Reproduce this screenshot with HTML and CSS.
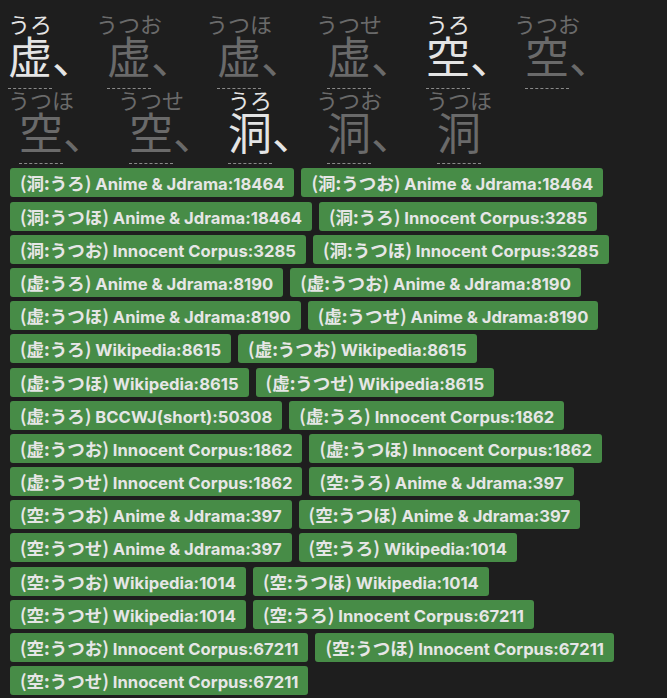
FILE: index.html
```html
<!DOCTYPE html>
<html lang="ja">
<head>
<meta charset="utf-8">
<link rel="stylesheet" href="styles.css">
</head>
<body>
<div class="readings">
  <span class="word on"><span class="stack"><span class="rt">うろ</span><span class="rb">虚</span></span><span class="sep">、</span></span>
  <span class="word long"><span class="stack"><span class="rt">うつお</span><span class="rb">虚</span></span><span class="sep">、</span></span>
  <span class="word long"><span class="stack"><span class="rt">うつほ</span><span class="rb">虚</span></span><span class="sep">、</span></span>
  <span class="word long"><span class="stack"><span class="rt">うつせ</span><span class="rb">虚</span></span><span class="sep">、</span></span>
  <span class="word on"><span class="stack"><span class="rt">うろ</span><span class="rb">空</span></span><span class="sep">、</span></span>
  <span class="word long"><span class="stack"><span class="rt">うつお</span><span class="rb">空</span></span><span class="sep">、</span></span>
  <span class="word long"><span class="stack"><span class="rt">うつほ</span><span class="rb">空</span></span><span class="sep">、</span></span>
  <span class="word long"><span class="stack"><span class="rt">うつせ</span><span class="rb">空</span></span><span class="sep">、</span></span>
  <span class="word on"><span class="stack"><span class="rt">うろ</span><span class="rb">洞</span></span><span class="sep">、</span></span>
  <span class="word long"><span class="stack"><span class="rt">うつお</span><span class="rb">洞</span></span><span class="sep">、</span></span>
  <span class="word long"><span class="stack"><span class="rt">うつほ</span><span class="rb">洞</span></span></span>
</div>
<div class="tags">
  <span class="tag"><span class="src">(洞:うろ)</span> Anime &amp; Jdrama:18464</span>
  <span class="tag"><span class="src">(洞:うつお)</span> Anime &amp; Jdrama:18464</span>
  <span class="tag"><span class="src">(洞:うつほ)</span> Anime &amp; Jdrama:18464</span>
  <span class="tag"><span class="src">(洞:うろ)</span> Innocent Corpus:3285</span>
  <span class="tag"><span class="src">(洞:うつお)</span> Innocent Corpus:3285</span>
  <span class="tag"><span class="src">(洞:うつほ)</span> Innocent Corpus:3285</span>
  <span class="tag"><span class="src">(虚:うろ)</span> Anime &amp; Jdrama:8190</span>
  <span class="tag"><span class="src">(虚:うつお)</span> Anime &amp; Jdrama:8190</span>
  <span class="tag"><span class="src">(虚:うつほ)</span> Anime &amp; Jdrama:8190</span>
  <span class="tag"><span class="src">(虚:うつせ)</span> Anime &amp; Jdrama:8190</span>
  <span class="tag"><span class="src">(虚:うろ)</span> Wikipedia:8615</span>
  <span class="tag"><span class="src">(虚:うつお)</span> Wikipedia:8615</span>
  <span class="tag"><span class="src">(虚:うつほ)</span> Wikipedia:8615</span>
  <span class="tag"><span class="src">(虚:うつせ)</span> Wikipedia:8615</span>
  <span class="tag"><span class="src">(虚:うろ)</span> BCCWJ(short):50308</span>
  <span class="tag"><span class="src">(虚:うろ)</span> Innocent Corpus:1862</span>
  <span class="tag"><span class="src">(虚:うつお)</span> Innocent Corpus:1862</span>
  <span class="tag"><span class="src">(虚:うつほ)</span> Innocent Corpus:1862</span>
  <span class="tag"><span class="src">(虚:うつせ)</span> Innocent Corpus:1862</span>
  <span class="tag"><span class="src">(空:うろ)</span> Anime &amp; Jdrama:397</span>
  <span class="tag"><span class="src">(空:うつお)</span> Anime &amp; Jdrama:397</span>
  <span class="tag"><span class="src">(空:うつほ)</span> Anime &amp; Jdrama:397</span>
  <span class="tag"><span class="src">(空:うつせ)</span> Anime &amp; Jdrama:397</span>
  <span class="tag"><span class="src">(空:うろ)</span> Wikipedia:1014</span>
  <span class="tag"><span class="src">(空:うつお)</span> Wikipedia:1014</span>
  <span class="tag"><span class="src">(空:うつほ)</span> Wikipedia:1014</span>
  <span class="tag"><span class="src">(空:うつせ)</span> Wikipedia:1014</span>
  <span class="tag"><span class="src">(空:うろ)</span> Innocent Corpus:67211</span>
  <span class="tag"><span class="src">(空:うつお)</span> Innocent Corpus:67211</span>
  <span class="tag"><span class="src">(空:うつほ)</span> Innocent Corpus:67211</span>
  <span class="tag"><span class="src">(空:うつせ)</span> Innocent Corpus:67211</span>
</div>
</body>
</html>
```
FILE: styles.css
```css
html, body {
  background: #1e1e1e;
}
body {
  margin: 0;
  padding: 13px 8px 0 8px;
  font-family: "Noto Sans CJK JP", sans-serif;
  color: #e4e4e4;
}
.readings {
  display: flex;
  flex-wrap: wrap;
  width: 651px;
}
.word {
  display: flex;
  align-items: flex-end;
  color: #6a6a6a;
}
.word.on {
  color: #e4e4e4;
}
.stack {
  display: flex;
  flex-direction: column;
  align-items: center;
}
.rt {
  font-size: 22px;
  line-height: 20px;
  height: 20px;
  white-space: nowrap;
}
.rb {
  font-size: 44px;
  line-height: 44px;
  padding-bottom: 10.7px;
  border-bottom: 1px dashed #8a8a8a;
}
.sep {
  font-size: 44px;
  line-height: 44px;
  padding-bottom: 11.7px;
}
.word.long .sep {
  margin-left: -11px;
  margin-right: 11px;
}
.tags {
  display: flex;
  flex-wrap: wrap;
  column-gap: 7px;
  row-gap: 4.2px;
  width: 649px;
  margin-top: 4px;
  padding-left: 2px;
}
.tag {
  display: block;
  height: 29px;
  box-sizing: border-box;
  background: #478c47;
  color: #e6e6e6;
  font-family: Inter, "Noto Sans", sans-serif;
  font-weight: 700;
  font-size: 16.6px;
  line-height: 21px;
  padding: 4px 10px;
  border-radius: 3px;
  white-space: nowrap;
}
.src {
  font-family: "Noto Sans CJK JP", sans-serif;
  font-size: 17.5px;
  line-height: 21px;
}
```
